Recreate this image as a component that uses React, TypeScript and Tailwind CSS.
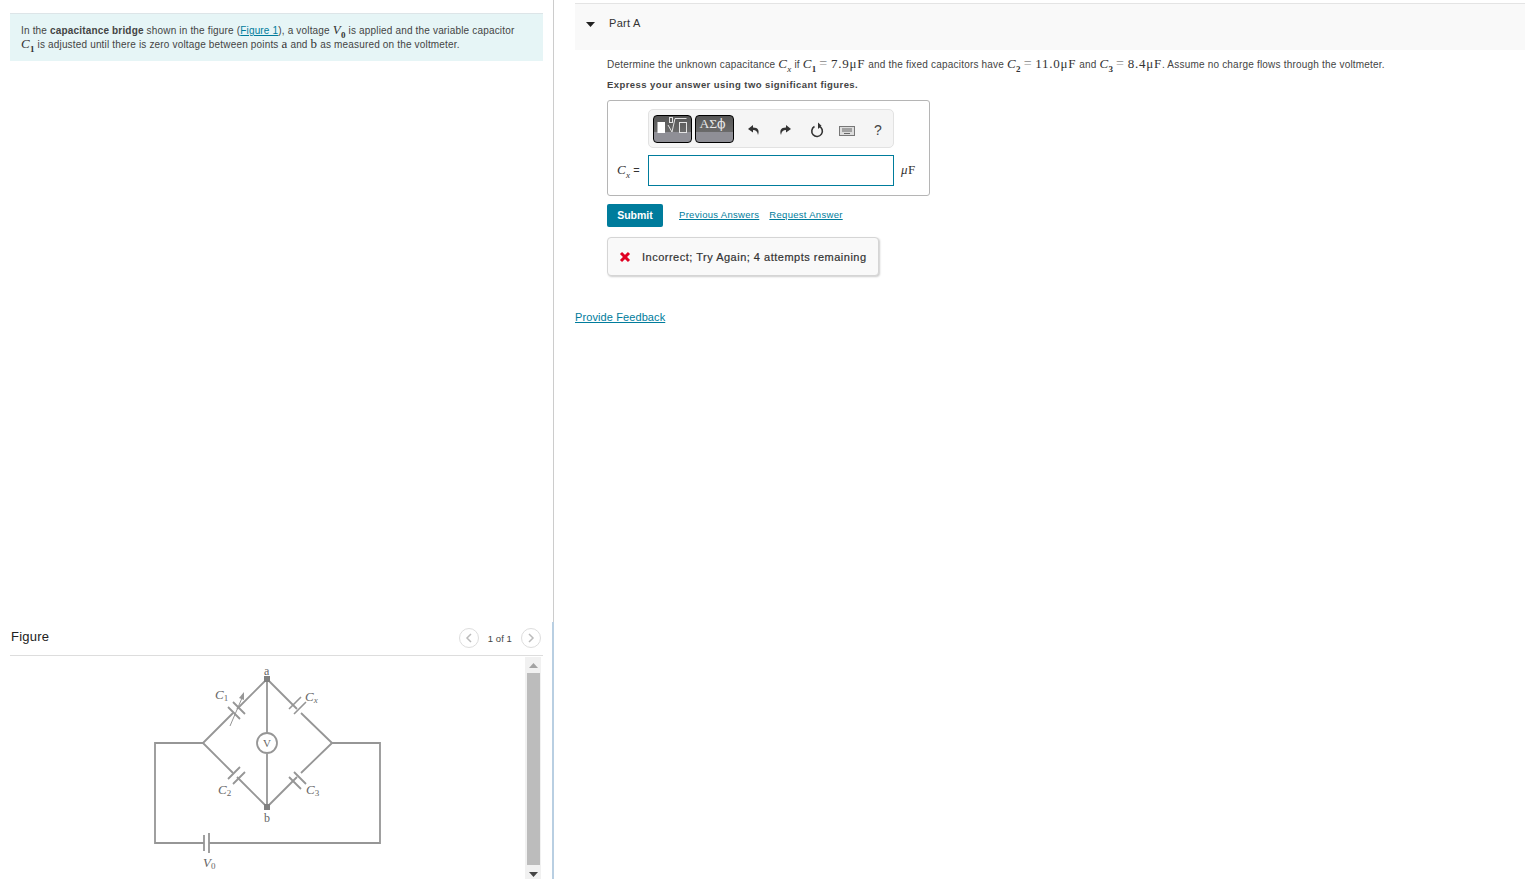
import React from "react";

const M = ({ children, className = "" }: { children: React.ReactNode; className?: string }) => (
  <span className={"font-['Liberation_Serif',serif] text-[13px] leading-none tracking-[0.2px] text-[#333] " + className}>{children}</span>
);
const V = ({ l, s, it = false }: { l: string; s: string; it?: boolean }) => (
  <M>
    <i>{l}</i>
    <sub className={"text-[9px] align-[-2px] leading-none " + (it ? "italic" : "font-bold")}>{s}</sub>
  </M>
);
const Eq = ({ v }: { v: string }) => (
  <M className="tracking-[0.75px]">
    <span className="mx-[3px] text-[#888] text-[14px]">=</span>
    {v}
  </M>
);

function Circuit() {
  const g = "#969696";
  const t = "font-['Liberation_Serif',serif]";
  return (
    <svg width="260" height="219" viewBox="140 660 260 219" className="block ml-[130px]">
      <g stroke={g} strokeWidth="1.8" fill="none">
        <path d="M203 743H155V843H204M209 843H380V743H332" />
        <path d="M267 679V733M267 754V807" />
        <path d="M203 743L233 713M237 709L267 679" />
        <path d="M267 679L297 709M301 713L332 743" />
        <path d="M203 743L233 773M237 777L267 807" />
        <path d="M267 807L297 777M301 773L332 743" />
        <path d="M228 707L240 719M233 702L245 714" />
        <path d="M294 714L306 702M289 709L301 697" strokeWidth="1.6" />
        <path d="M228 779L240 767M233 784L245 772" />
        <path d="M294 772L306 784M289 777L301 789" />
        <path d="M204 835V851M209 833V853" />
        <circle cx="267" cy="743" r="10" fill="#fff" />
      </g>
      <path d="M230 726L242 698" stroke={g} strokeWidth="1" />
      <path d="M244 692L244 700L239 698Z" fill={g} />
      <rect x="264" y="676" width="6" height="6" fill="#808080" />
      <rect x="264" y="804" width="6" height="6" fill="#808080" />
      <g fill="#666" className={t} fontSize="12">
        <text x="264" y="675">a</text>
        <text x="264" y="822">b</text>
        <text x="263" y="747" fontSize="11">V</text>
        <text x="215" y="699" fontStyle="italic" fontSize="13">C<tspan fontSize="9" dy="2" fontStyle="normal">1</tspan></text>
        <text x="305" y="701" fontStyle="italic" fontSize="13">C<tspan fontSize="9" dy="2">x</tspan></text>
        <text x="218" y="794" fontStyle="italic" fontSize="13">C<tspan fontSize="9" dy="2" fontStyle="normal">2</tspan></text>
        <text x="306" y="794" fontStyle="italic" fontSize="13">C<tspan fontSize="9" dy="2" fontStyle="normal">3</tspan></text>
        <text x="203" y="867" fontStyle="italic" fontSize="13">V<tspan fontSize="9" dy="2" fontStyle="normal">0</tspan></text>
      </g>
    </svg>
  );
}

function Toolbar() {
  const c = "#333";
  return (
    <div className="ml-[40px] w-[246px] h-[39px] rounded-[5px] border border-[#e2e2e2] bg-[#f5f5f5] flex items-center pl-[4px]">
      <div className="w-[39px] h-[28px] rounded-[4px] border border-black bg-[linear-gradient(#565656_0%,#6a6a6a_60%,#8f8f96_60%,#8f8f96_100%)] overflow-hidden">
        <svg width="37" height="26" viewBox="0 0 37 26" className="block">
          <rect x="3.500" y="6" width="7.500" height="11" fill="#fff" />
          <g fill="none" stroke="#e4e4e4" strokeWidth="1">
            <rect x="15.500" y="1.500" width="3" height="5" />
            <path d="M14 9L18 16L21 2.500H32.500" />
            <rect x="25.500" y="6.500" width="7" height="10" />
          </g>
        </svg>
      </div>
      <div className="ml-[3px] w-[39px] h-[28px] rounded-[4px] border border-black bg-[linear-gradient(#565656_0%,#6a6a6a_60%,#8f8f96_60%,#8f8f96_100%)] text-[#e8e8e8] font-['Liberation_Serif','DejaVu_Serif',serif] text-[13.5px] leading-[15px] pr-[4px] text-center whitespace-nowrap">
        ΑΣ<span className="font-['DejaVu_Serif',serif] text-[12.5px]">ϕ</span>
      </div>
      <svg width="14" height="12" viewBox="0 0 14 12" className="ml-[13px] mt-[3px]">
        <path d="M6 1L1 5L6 8.500V6C9 6 10.500 7.500 11 11C12.500 7 11.500 3.500 6 3.500Z" fill={c} />
      </svg>
      <svg width="14" height="12" viewBox="0 0 14 12" className="ml-[17px] mt-[3px]">
        <path d="M8 1L13 5L8 8.500V6C5 6 3.500 7.500 3 11C1.500 7 2.500 3.500 8 3.500Z" fill={c} />
      </svg>
      <svg width="14" height="16" viewBox="0 0 14 16" className="ml-[18px] mt-[3px]">
        <path d="M4.500 4.500A5.300 5.300 0 1 0 9 4.200" fill="none" stroke={c} strokeWidth="1.600" />
        <path d="M8 0.500L8 7L11.500 3.800Z" fill={c} />
      </svg>
      <svg width="16" height="10" viewBox="0 0 16 10" className="ml-[15px] mt-[5px]">
        <rect x="0.500" y="0.500" width="15" height="9" fill="#ddd" stroke="#777" />
        <path d="M3 3H13M3 5H13M5 7.500H11" stroke="#666" strokeWidth="1" />
      </svg>
      <span className="ml-[19px] mt-[3px] text-[14px] text-[#444]">?</span>
    </div>
  );
}

export default function App() {
  return (
    <div className="w-[1525px] h-[879px] overflow-hidden flex bg-white font-['Liberation_Sans',Arial,sans-serif] text-[#333]">
      <div className="relative w-[554px] h-full border-r border-[#ccc] pt-[13px] pl-[10px] pr-[10px] flex flex-col shrink-0">
        <div className="absolute right-[-1px] top-[622px] bottom-0 w-[2px] bg-[#b9cfe2]" />
        <div className="h-[48px] bg-[#e6f5f6] border-t border-[#dde5e8] pl-[11px] pt-[9px] text-[10px] leading-[14px] tracking-[0.17px] text-[#444]">
          <div className="h-[14px]">
            In the <b>capacitance bridge</b> shown in the figure (
            <span className="text-[#007c9c] underline">Figure 1</span>), a voltage <V l="V" s="0" /> is applied and the variable capacitor
          </div>
          <div className="h-[14px]">
            <V l="C" s="1" /> is adjusted until there is zero voltage between points <M>a</M> and <M>b</M> as measured on the voltmeter.
          </div>
        </div>
        <div className="mt-[568px] h-[27px] flex items-start justify-between border-b border-[#ddd] pl-px">
          <span className="text-[13px] leading-[15px] tracking-[0.25px] font-medium text-[#222]">Figure</span>
          <div className="flex items-center mr-[2px] mt-[-1px]">
            <span className="w-[20px] h-[20px] rounded-full border border-[#ddd] flex items-center justify-center">
              <svg width="8" height="10" viewBox="0 0 8 10"><path d="M6 1L2 5L6 9" fill="none" stroke="#bbb" strokeWidth="1.500" /></svg>
            </span>
            <span className="mx-[9px] mt-[2px] text-[9.5px] tracking-[0.1px] text-[#444]">1 of 1</span>
            <span className="w-[20px] h-[20px] rounded-full border border-[#ddd] flex items-center justify-center">
              <svg width="8" height="10" viewBox="0 0 8 10"><path d="M2 1L6 5L2 9" fill="none" stroke="#bbb" strokeWidth="1.500" /></svg>
            </span>
          </div>
        </div>
        <div className="relative flex-1 overflow-hidden pt-[4px]">
          <Circuit />
          <div className="absolute right-[2px] top-[1px] bottom-0 w-[16px] bg-[#f1f1f1] flex flex-col items-center">
            <svg width="9" height="5" viewBox="0 0 9 5" className="mt-[6px]"><path d="M0 5L4.500 0L9 5Z" fill="#a3a3a3" /></svg>
            <div className="mt-[5px] w-[13px] h-[192px] bg-[#bcbcbc]" />
            <svg width="9" height="5" viewBox="0 0 9 5" className="mt-[7px]"><path d="M0 0H9L4.500 5Z" fill="#444" /></svg>
          </div>
        </div>
      </div>

      <div className="flex-1 pl-[21px] pt-[3px] min-w-0">
        <div className="h-[47px] bg-[#f9f9f9] border-t border-[#e4e4e4] flex items-start pt-[12px] pl-[11px]">
          <svg width="9" height="5" viewBox="0 0 9 5" className="mt-[6px]"><path d="M0 0H9L4.500 5Z" fill="#222" /></svg>
          <span className="ml-[14px] text-[11px] leading-[14px] tracking-[0.3px] text-[#333]">Part A</span>
        </div>
        <div className="pl-[32px]">
          <div className="mt-[7px] h-[14px] text-[10px] leading-[14px] tracking-[0.2px] text-[#444] whitespace-nowrap">
            Determine the unknown capacitance <V l="C" s="x" it /> if <V l="C" s="1" /><Eq v="7.9μF" /> and the fixed capacitors have <V l="C" s="2" /><Eq v="11.0μF" /> and <V l="C" s="3" /><Eq v="8.4μF" />. Assume no charge flows through the voltmeter.
          </div>
          <div className="mt-[7px] h-[14px] text-[9.5px] leading-[14px] font-bold tracking-[0.43px] text-[#444]">
            Express your answer using two significant figures.
          </div>
          <div className="mt-[8px] w-[323px] h-[96px] rounded-[3px] border border-[#b5b5b5] pt-[8px]">
            <Toolbar />
            <div className="mt-[7px] flex items-center">
              <div className="w-[40px] pl-[9px] text-[11px] leading-[16px] mb-[2px] text-[#333] whitespace-nowrap">
                <M><i>C</i><sub className="text-[9px] align-[-2px] leading-none"><i>x</i></sub></M> =
              </div>
              <div className="w-[246px] h-[31px] border border-[#007c9c] bg-white" />
              <M className="ml-[7px] mb-[2px] tracking-[0.5px]"><i>μ</i>F</M>
            </div>
          </div>
          <div className="mt-[8px] flex items-center">
            <button className="w-[56px] h-[23px] rounded-[2px] bg-[#007c9c] text-white text-[10.5px] font-bold">Submit</button>
            <span className="ml-[16px] text-[9.5px] tracking-[0.3px] text-[#007c9c] underline">Previous Answers</span>
            <span className="ml-[10px] text-[9.5px] tracking-[0.3px] text-[#007c9c] underline">Request Answer</span>
          </div>
          <div className="mt-[10px] w-[272px] h-[39px] rounded-[4px] border border-[#d5d5d5] bg-[#f9f9f9] shadow-[1px_1px_2px_rgba(0,0,0,0.2)] flex items-center pl-[11px]">
            <svg width="12" height="12" viewBox="0 0 12 12"><path d="M2 2L10 10M10 2L2 10" stroke="#e00022" strokeWidth="3" /></svg>
            <span className="ml-[11px] mt-[1px] text-[11px] tracking-[0.5px] [-webkit-text-stroke:0.2px_#333] text-[#333] whitespace-nowrap">Incorrect; Try Again; 4 attempts remaining</span>
          </div>
        </div>
        <div className="mt-[33px] text-[11px] tracking-[0.1px] text-[#007c9c] underline">Provide Feedback</div>
      </div>
    </div>
  );
}
